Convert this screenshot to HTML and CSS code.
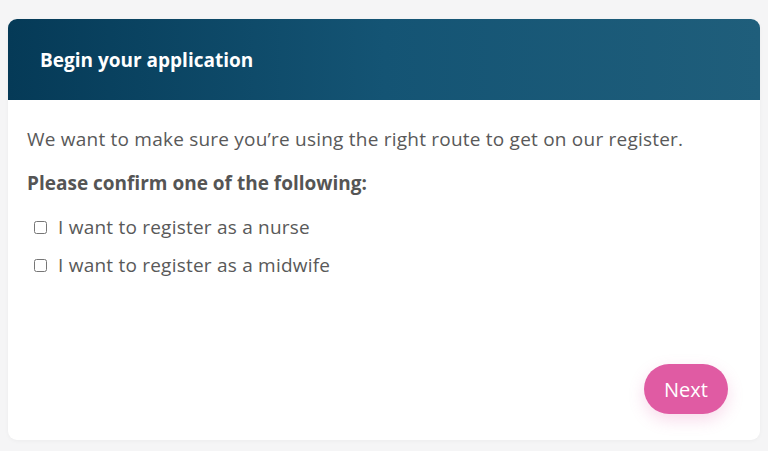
FILE: index.html
```html
<!DOCTYPE html>
<html lang="en">
<head>
<meta charset="utf-8">
<title>Begin your application</title>
<link rel="stylesheet" href="styles.css">
</head>
<body>
<div class="card">
  <div class="card-header">
    <h1 class="card-title">Begin your application</h1>
  </div>
  <div class="card-body">
    <p class="intro">We want to make sure you’re using the right route to get on our register.</p>
    <p class="prompt">Please confirm one of the following:</p>
    <ul class="options">
      <li class="option"><label class="option-label"><input type="checkbox" class="check"> I want to register as a nurse</label></li>
      <li class="option"><label class="option-label"><input type="checkbox" class="check"> I want to register as a midwife</label></li>
    </ul>
    <div class="actions">
      <button class="btn-next" type="button">Next</button>
    </div>
  </div>
</div>
</body>
</html>
```

FILE: styles.css
```css
html, body {
  margin: 0;
  padding: 0;
}
body {
  background: #f5f5f6;
  font-family: "Open Sans", sans-serif;
  color: #555;
  padding: 19px 8px 0 8px;
  height: 451px;
  box-sizing: border-box;
}
.card {
  background: #fff;
  border-radius: 9px;
  overflow: hidden;
  height: 421px;
  display: flex;
  flex-direction: column;
  box-shadow: 0 1px 4px rgba(0,0,0,0.04);
}
.card-header {
  height: 81px;
  background: linear-gradient(90deg, #053a57 0%, #145474 50%, #1f5e7b 100%);
  display: flex;
  align-items: center;
  padding: 0 32px;
  flex-shrink: 0;
}
.card-title {
  margin: 0;
  color: #fff;
  font-size: 19px;
  font-weight: 700;
}
.card-body {
  flex: 1;
  display: flex;
  flex-direction: column;
  padding: 26px 19px 26px 19px;
}
.intro {
  margin: 0 0 18px 0;
  font-size: 19px;
  line-height: 26px;
  letter-spacing: 0.22px;
  color: #595959;
}
.prompt {
  margin: 0 0 18px 0;
  font-size: 19px;
  line-height: 26px;
  font-weight: 700;
  color: #555;
}
.options {
  list-style: none;
  margin: 0;
  padding: 0 0 0 7px;
  display: flex;
  flex-direction: column;
  gap: 12px;
}
.option-label {
  display: flex;
  align-items: center;
  gap: 11px;
  font-size: 19px;
  line-height: 26px;
  letter-spacing: 0.22px;
  color: #595959;
}
.check {
  margin: 0;
  width: 13px;
  height: 13px;
}
.actions {
  margin-top: auto;
  display: flex;
  justify-content: flex-end;
  padding-right: 13px;
}
.btn-next {
  width: 84px;
  height: 50px;
  border: none;
  border-radius: 25px;
  background: #e05ba3;
  color: #fff;
  font-family: "Open Sans", sans-serif;
  font-size: 20px;
  box-shadow: 0 6px 16px rgba(224, 91, 163, 0.22);
}
```
